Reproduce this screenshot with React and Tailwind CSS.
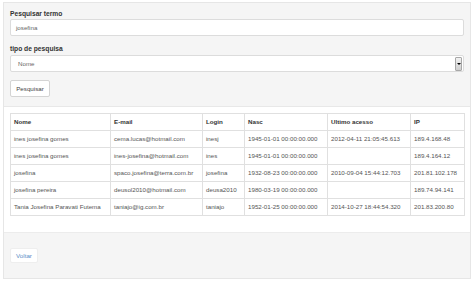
import React from "react";

const rows = [
  ["ines josefina gomes", "cema.lucas@hotmail.com", "inesj", "1945-01-01 00:00:00.000", "2012-04-11 21:05:45.613", "189.4.168.48"],
  ["ines josefina gomes", "ines-josefina@hotmail.com", "ines", "1945-01-01 00:00:00.000", "", "189.4.164.12"],
  ["josefina", "spaco.josefina@terra.com.br", "josefina", "1932-08-23 00:00:00.000", "2010-09-04 15:44:12.703", "201.81.102.178"],
  ["josefina pereira", "deusol2010@hotmail.com", "deusa2010", "1980-03-19 00:00:00.000", "", "189.74.94.141"],
  ["Tania Josefina Paravati Futema", "taniajo@ig.com.br", "taniajo", "1952-01-25 00:00:00.000", "2014-10-27 18:44:54.320", "201.83.200.80"],
];

const headers = ["Nome", "E-mail", "Login", "Nasc", "Ultimo acesso", "IP"];
const widths = ["w-[100px]", "w-[92px]", "w-[42px]", "w-[83px]", "w-[83px]", "w-[54px]"];

function App() {
  return (
    <div className="w-[474px] h-[281px] bg-white pt-[2px] pl-[3px] font-['Liberation_Sans',Arial,sans-serif]">
      <div className="w-[468px] h-[277px] border border-[#e6e6e6] flex flex-col">
        {/* search form */}
        <div className="bg-[#f5f5f5] border-b border-[#e8e8e8] px-[6px] pt-[6px] h-[104px]">
          <div className="text-[6.7px] font-bold text-[#333] leading-[9px] mb-[1px]">Pesquisar termo</div>
          <div className="h-[17px] bg-white border border-[#dcdcdc] rounded-[2px] flex items-center px-[5px] text-[6.2px] text-[#666]">
            josefina
          </div>
          <div className="text-[6.7px] font-bold text-[#333] leading-[9px] mt-[8px] mb-[2px]">tipo de pesquisa</div>
          <div className="h-[17px] bg-white border border-[#dcdcdc] rounded-[2px] flex items-center pl-[7px] pr-[1px] text-[6.2px] text-[#666]">
            <span className="flex-1">Nome</span>
            <div className="w-[7px] h-[14px] border border-[#a8a8a8] rounded-[1px] bg-gradient-to-b from-[#f2f2f2] to-[#cfcfcf] flex items-center justify-center">
              <div className="w-0 h-0 border-l-[2px] border-r-[2px] border-t-[2px] border-l-transparent border-r-transparent border-t-black" />
            </div>
          </div>
          <div className="mt-[8px] w-[40px] h-[17px] bg-white border border-[#d4d4d4] rounded-[2px] flex items-center justify-center text-[6.2px] text-[#444]">
            Pesquisar
          </div>
        </div>

        {/* results */}
        <div className="bg-white px-[6px] pt-[6px] h-[126px] border-b border-[#ececec]">
          <table className="table-fixed border-collapse w-[454px] text-[6.2px] text-[#555]">
            <thead>
              <tr className="h-[17px]">
                {headers.map((h, i) => (
                  <th key={h} className={`${widths[i]} border border-[#e0e0e0] text-left font-bold text-[#333] px-[3px]`}>{h}</th>
                ))}
              </tr>
            </thead>
            <tbody>
              {rows.map((r, i) => (
                <tr key={i} className="h-[17px]">
                  {r.map((c, j) => (
                    <td key={j} className="border border-[#e0e0e0] px-[3px] whitespace-nowrap overflow-hidden">{c}</td>
                  ))}
                </tr>
              ))}
            </tbody>
          </table>
        </div>

        {/* footer */}
        <div className="flex-1 bg-[#f5f5f5] px-[6px] pt-[15px]">
          <div className="w-[28px] h-[15px] bg-white border border-[#eeeeee] rounded-[2px] flex items-center justify-center text-[6.2px] text-[#5b8fc7]">
            Voltar
          </div>
        </div>
      </div>
    </div>
  );
}

export default App;
